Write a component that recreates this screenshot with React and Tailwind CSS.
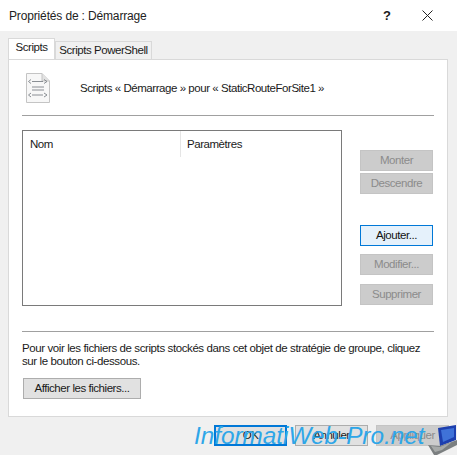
import React from 'react';

const FONT = { fontFamily: '"Liberation Sans", Arial, sans-serif' };

const SideButton = ({ label, focused, className = '' }) => (
    <div
        className={`h-[21px] w-[73px] pt-px flex items-center justify-center text-[11.5px] tracking-[-0.45px] border ${
            focused
                ? 'bg-[#e5f1fb] border-[#0078d7] text-[#111]'
                : 'bg-[#cccccc] border-[#c4c4c4] text-[#8b8b8b]'
        } ${className}`}
    >
        {label}
    </div>
);

const ScriptIcon = () => (
    <svg width="26" height="32" viewBox="0 0 26 32" fill="none">
        <path d="M1.5 1.5H17L24.5 9V30.5H1.5Z" fill="#f7f7f7" stroke="#c4c4c4" />
        <path d="M17 1.5V9H24.5" fill="#e2e2e2" stroke="#c4c4c4" />
        <g stroke="#7d8288" strokeWidth="0.9">
            <path d="M7 9.5H18" />
            <path d="M6 7.5L3.5 9.5L6 11.5M19 7.5L22 9.5L19 11.5" />
            <path d="M7 15H19M7 18H19" />
            <path d="M7 23H18" />
            <path d="M6 21L3.5 23L6 25M19 21L22 23L19 25" />
        </g>
    </svg>
);

const Laptop = () => (
    <svg width="29" height="30" viewBox="0 0 29 30">
        <path d="M10 3L28 0V15L12 21Z" fill="#1d3fae" />
        <path d="M13 5L26 3V12L15 17Z" fill="#3f72d8" />
        <path d="M0 20L12 21L29 15V20L9 30H6Z" fill="#7b7f80" />
        <path d="M3 21L12 22L24 17L14 25L7 27Z" fill="#a7aaa9" />
    </svg>
);

export default function App() {
    return (
        <div className="relative w-[457px] h-[455px] overflow-hidden bg-[#f0f0f0] text-[#1a1a1a]" style={FONT}>
            {/* title bar */}
            <div className="h-[31px] bg-white flex items-center justify-between pl-[9px] pr-[24px]">
                <span className="text-[12px] tracking-[-0.15px] text-[#222]">Propriétés de : Démarrage</span>
                <div className="flex items-center gap-[31px]">
                    <span className="text-[13px] font-semibold">?</span>
                    <svg width="11" height="11" viewBox="0 0 11 11" stroke="#222" strokeWidth="1">
                        <path d="M0.5 0.5L10.5 10.5M10.5 0.5L0.5 10.5" />
                    </svg>
                </div>
            </div>

            {/* tabs */}
            <div className="flex items-end h-[28px] pl-[8px] relative z-10 text-[11.5px] tracking-[-0.45px] whitespace-nowrap">
                <div className="h-[21px] w-[47px] bg-white border border-b-0 border-[#d9d9d9] flex items-center justify-center pb-[3px]">
                    Scripts
                </div>
                <div className="h-[19px] w-[97px] mb-[-1px] bg-[#f0f0f0] border border-[#d9d9d9] flex items-center justify-center">
                    Scripts PowerShell
                </div>
            </div>

            {/* panel */}
            <div className="ml-[8px] w-[440px] h-[358px] bg-white border border-[#d9d9d9] px-[13px] text-[11.5px] tracking-[-0.45px]">
                <div className="h-[55px] flex items-center pl-[3px] gap-[29px]">
                    <ScriptIcon />
                    <span className="mt-[2px]">Scripts « Démarrage » pour « StaticRouteForSite1 »</span>
                </div>
                <div className="h-px w-[412px] bg-[#a0a0a0]" />

                <div className="flex mt-[14px]">
                    <div className="w-[320px] h-[176px] border border-[#7a7a7a]">
                        <div className="flex h-[26px] items-center">
                            <div className="w-[158px] h-full pl-[7px] pt-px flex items-center border-r border-[#e5e5e5]">Nom</div>
                            <div className="pl-[6px] pt-px">Paramètres</div>
                        </div>
                    </div>
                    <div className="ml-[18px] pt-[20px] flex flex-col">
                        <SideButton label="Monter" />
                        <SideButton label="Descendre" className="mt-[2px]" />
                        <SideButton label="Ajouter..." focused className="mt-[31px]" />
                        <SideButton label="Modifier..." className="mt-[8px]" />
                        <SideButton label="Supprimer" className="mt-[9px]" />
                    </div>
                </div>

                <div className="h-px w-[412px] bg-[#a0a0a0] mt-[25px]" />
                <p className="mt-[10px] w-[402px] leading-[13px] tracking-[-0.4px]">
                    Pour voir les fichiers de scripts stockés dans cet objet de stratégie de groupe, cliquez sur le bouton ci-dessous.
                </p>
                <div className="mt-[10px] ml-px h-[21px] w-[118px] pt-px bg-[#e1e1e1] border border-[#adadad] flex items-center justify-center">
                    Afficher les fichiers...
                </div>
            </div>

            {/* dialog buttons */}
            <div className="flex pl-[214px] mt-[8px] gap-[8px] text-[11.5px] tracking-[-0.45px]">
                <div className="h-[21px] w-[73px] border-2 border-[#0078d7] bg-[#e1e1e1] flex items-center justify-center">OK</div>
                <div className="h-[21px] w-[73px] border border-[#adadad] bg-[#e1e1e1] flex items-center justify-center">Annuler</div>
                <div className="h-[21px] w-[73px] border border-[#c4c4c4] bg-[#cccccc] text-[#8b8b8b] flex items-center justify-center">Appliquer</div>
            </div>

            {/* watermark over the buttons */}
            <div className="absolute left-[194px] top-[421px] text-[#2ea6e8] text-[24.3px] italic leading-[30px] whitespace-nowrap">
                InformatiWeb-Pro.net
            </div>
            <div className="absolute left-[428px] top-[425px]">
                <Laptop />
            </div>
        </div>
    );
}
